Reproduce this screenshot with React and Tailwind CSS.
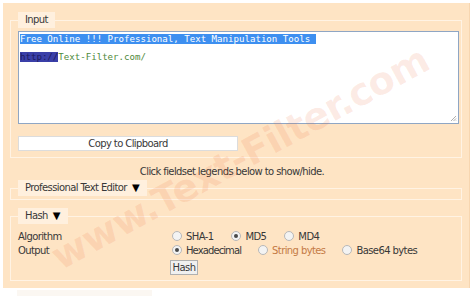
const UI = { fontFamily: '"DejaVu Sans", Verdana, sans-serif', letterSpacing: '-0.6px' };
const MONO = { fontFamily: '"DejaVu Sans Mono", "Liberation Mono", monospace', letterSpacing: '0px' };

function Radio({ checked }) {
  return (
    <span className="inline-flex w-[10px] h-[10px] rounded-full border border-[#b8b8b8] bg-[#f3f3f3] items-center justify-center shrink-0">
      {checked && <span className="block w-[4px] h-[4px] rounded-full bg-[#4a4a4a]" />}
    </span>
  );
}

function Opt({ checked, label, className = '', labelClass = '' }) {
  return (
    <span className={`inline-flex items-center ${className}`}>
      <Radio checked={checked} />
      <span className={`ml-[4px] ${labelClass}`}>{label}</span>
    </span>
  );
}

export default function App() {
  return (
    <div className="relative w-[474px] h-[296px] overflow-hidden bg-white text-[10px] text-[#383838]" style={UI}>
      <div className="ml-[3px] mt-[3px] w-[467px] h-[285px] bg-[#fee4c4] pt-[9px] border-r border-[#f7d6b0]">
        {/* Input fieldset */}
        <fieldset className="mx-[7px] border border-[#fff3e4] pl-[7px] pb-[6px]">
          <legend className="px-[7px] h-[16px] leading-[16px] bg-[#fff0de]">Input</legend>
          <div className="relative mt-[3px] w-[441px] h-[93px] bg-white border border-[#8fa6c4] pl-[1px] pt-[2px]" style={MONO}>
            <div className="text-[9.1px] leading-[10px] text-white whitespace-pre">
              <span className="bg-[#3d8ff0]">Free Online !!! Professional, Text Manipulation Tools </span>
            </div>
            <div className="mt-[8px] text-[9.1px] leading-[10px] whitespace-pre">
              <span className="bg-[#3a3fa8] text-[#1a1a60]">http://</span>
              <span className="text-[#4f8a3c]">Text-Filter.com/</span>
            </div>
            <svg className="absolute right-[1px] bottom-[1px]" width="7" height="7" viewBox="0 0 7 7">
              <path d="M6 1 L1 6 M6 3.5 L3.5 6 M6 5.5 L5.5 6" stroke="#9a9a9a" strokeWidth="0.8" />
            </svg>
          </div>
          <div className="mt-[12px] w-[220px] h-[15px] bg-white border border-[#dcdcdc] flex items-center justify-center">
            Copy to Clipboard
          </div>
        </fieldset>

        <div className="mt-[7px] h-[14px] leading-[14px] text-center pr-[8px]">Click fieldset legends below to show/hide.</div>

        {/* Professional Text Editor */}
        <fieldset className="mt-[1px] mx-[7px] border border-[#fff3e4] pl-[7px] pb-[3px]">
          <legend className="px-[7px] h-[16px] leading-[16px] bg-[#fff0de]">Professional Text Editor<span className="ml-[5px] text-black" style={{ letterSpacing: 0 }}>▼</span></legend>
        </fieldset>

        {/* Hash */}
        <fieldset className="mt-[8px] mx-[7px] border border-[#fff3e4] pl-[7px] pb-[5px]">
          <legend className="px-[7px] h-[16px] leading-[16px] bg-[#fff0de]">Hash<span className="ml-[5px] text-black" style={{ letterSpacing: 0 }}>▼</span></legend>
          <div className="mt-[5px] flex h-[14px] items-center">
            <span className="w-[154px]">Algorithm</span>
            <Opt checked={false} label="SHA-1" />
            <Opt checked={true} label="MD5" className="ml-[18px]" />
            <Opt checked={false} label="MD4" className="ml-[18px]" />
          </div>
          <div className="flex h-[14px] items-center">
            <span className="w-[154px]">Output</span>
            <Opt checked={true} label="Hexadecimal" labelClass="tracking-[-0.9px]" />
            <Opt checked={false} label="String bytes" className="ml-[17px]" labelClass="text-[#c47a45]" />
            <Opt checked={false} label="Base64 bytes" className="ml-[17px]" />
          </div>
          <div className="mt-[3px] pl-[152px]">
            <div className="w-[28px] h-[15px] bg-[#f0f0f0] border border-[#b0b0b0] flex items-center justify-center">Hash</div>
          </div>
        </fieldset>
      </div>
      <div className="ml-[17px] mt-[2px] w-[135px] h-[10px] bg-[#fbf7f2]" />

      {/* watermark */}
      <div
        className="pointer-events-none absolute left-[240px] top-[158px] whitespace-nowrap font-bold text-[38px] leading-none text-[rgba(236,96,48,0.13)]"
        style={{ fontFamily: '"DejaVu Sans", Verdana, sans-serif', transform: 'translate(-50%, -50%) rotate(-28.6deg)' }}
      >
        www.Text-Filter.com
      </div>
    </div>
  );
}
